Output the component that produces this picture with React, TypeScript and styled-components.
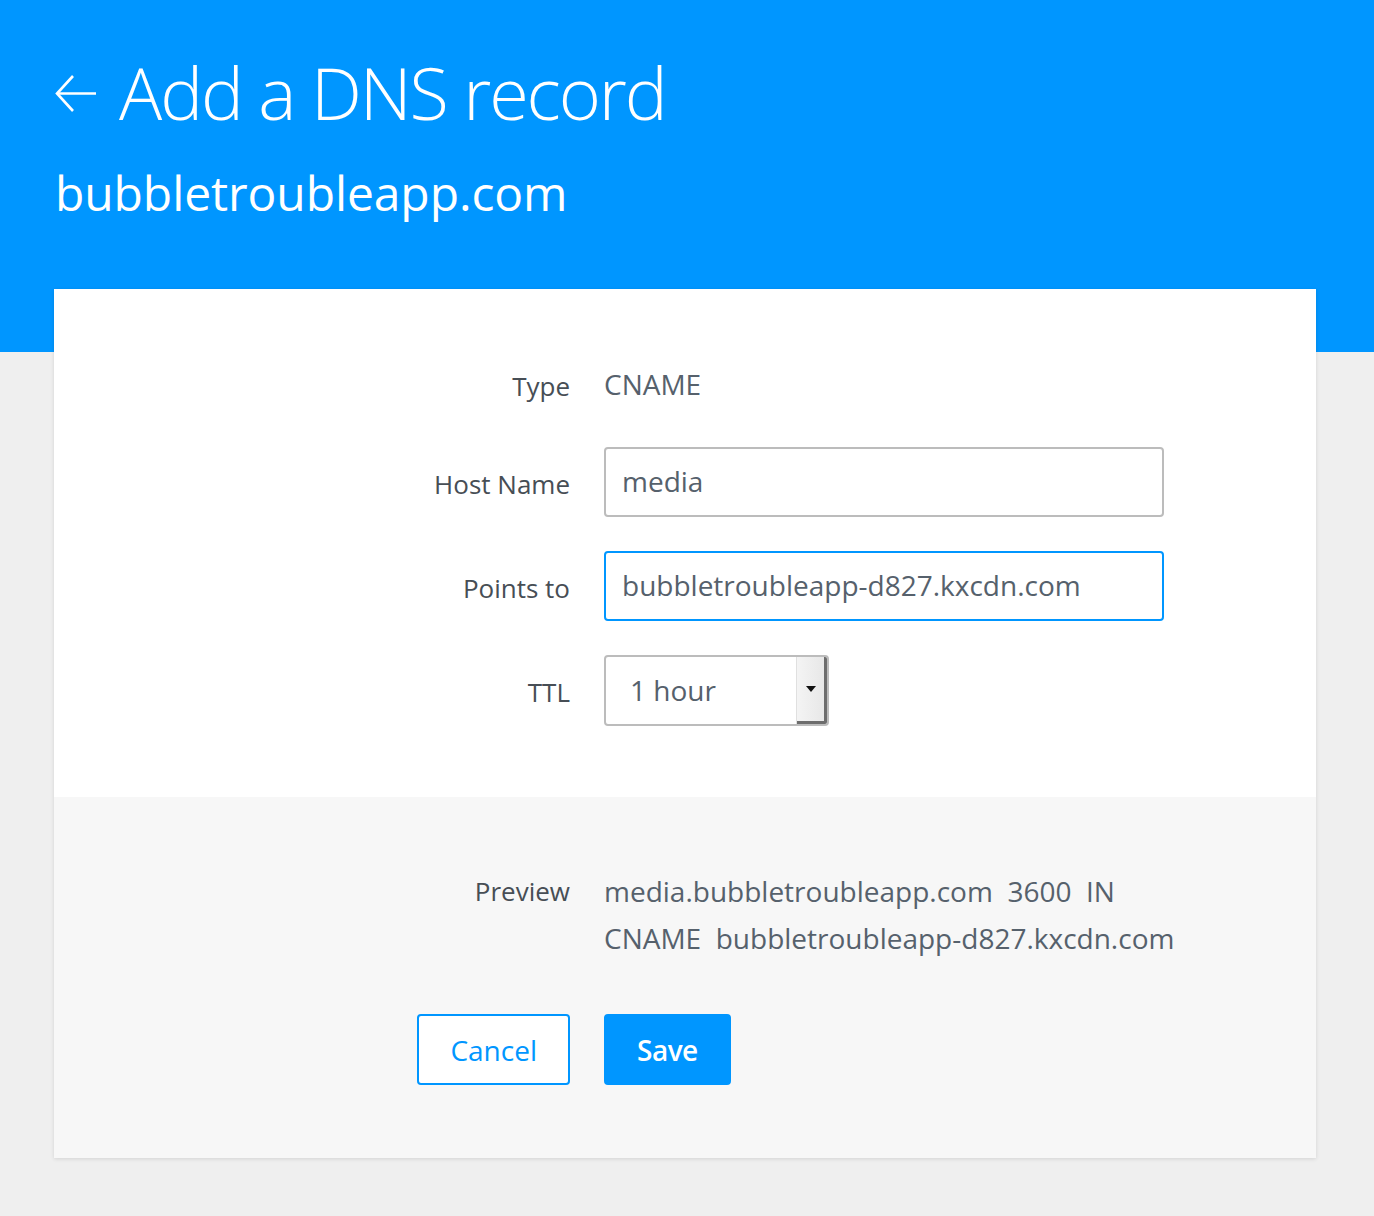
import * as React from 'react';
import styled, { createGlobalStyle } from 'styled-components';

const GlobalStyle = createGlobalStyle`
  html, body {
    margin: 0;
    padding: 0;
    background: #efefef;
    font-family: "Open Sans", "Liberation Sans", sans-serif;
  }
  * {
    box-sizing: border-box;
  }
`;

const Page = styled.div`
  min-height: 1216px;
  background: #efefef;
`;

const Header = styled.header`
  background: #0096ff;
  height: 352px;
  padding: 56px 55px 0;
  color: #fff;
`;

const TitleRow = styled.div`
  display: flex;
  align-items: center;
  gap: 22px;
`;

const BackArrow = styled.svg`
  width: 42px;
  height: 42px;
  margin-top: 4px;
  flex: none;
`;

const Title = styled.h1`
  margin: 0;
  font-size: 72px;
  font-weight: 300;
  line-height: 72px;
  letter-spacing: -2.1px;
`;

const Domain = styled.h2`
  margin: 41px 0 0;
  font-size: 48px;
  font-weight: 400;
  line-height: 48px;
  letter-spacing: -0.1px;
`;

const Card = styled.div`
  width: 1262px;
  margin: -63px 0 0 54px;
  background: #fff;
  box-shadow: 0 1px 4px rgba(0, 0, 0, 0.12);
`;

const Section = styled.section<{ $muted?: boolean }>`
  display: grid;
  grid-template-columns: 516px 1fr;
  column-gap: 34px;
  row-gap: ${(p) => (p.$muted ? '52px' : '34px')};
  padding: ${(p) => (p.$muted ? '71px 0 73px' : '66px 0 71px')};
  background: ${(p) => (p.$muted ? '#f7f7f7' : '#fff')};
`;

const Label = styled.div<{ $top?: boolean }>`
  display: flex;
  align-items: ${(p) => (p.$top ? 'flex-start' : 'center')};
  justify-content: flex-end;
  font-size: 26px;
  color: #474e55;
  line-height: 47px;
  padding-top: ${(p) => (p.$top ? '0' : '4px')};
`;

const Value = styled.div`
  display: flex;
  align-items: center;
  min-height: 58px;
  font-size: 28px;
  color: #56616c;
`;

const TextInput = styled.div<{ $focused?: boolean }>`
  width: 560px;
  height: 70px;
  display: flex;
  align-items: center;
  padding: 0 16px 2px;
  font-size: 28px;
  color: #56616c;
  background: #fff;
  border: 2px solid ${(p) => (p.$focused ? '#0096ff' : '#bcbcbc')};
  border-radius: 4px;
`;

const Select = styled.div`
  width: 225px;
  height: 71px;
  display: flex;
  background: #fff;
  border: 2px solid #bcbcbc;
  border-radius: 4px;
  overflow: hidden;
`;

const SelectText = styled.div`
  flex: 1;
  display: flex;
  align-items: center;
  padding: 0 0 2px 24px;
  font-size: 28px;
  color: #56616c;
`;

const SelectButton = styled.div`
  width: 31px;
  display: flex;
  align-items: center;
  justify-content: center;
  background: linear-gradient(to right, #f4f4f4, #e6e6e6);
  border-left: 1px solid #e0e0e0;
  box-shadow: inset -3px -3px 0 #6d6d6d;
`;

const Caret = styled.span`
  width: 0;
  height: 0;
  margin: 0 3px 3px 0;
  border-left: 5px solid transparent;
  border-right: 5px solid transparent;
  border-top: 6px solid #111;
`;

const PreviewText = styled.div`
  font-size: 28px;
  line-height: 47px;
  color: #56616c;
  white-space: pre;
`;

const Actions = styled.div<{ $end?: boolean }>`
  display: flex;
  justify-content: ${(p) => (p.$end ? 'flex-end' : 'flex-start')};
`;

const Button = styled.button<{ $primary?: boolean }>`
  height: 71px;
  padding: 0 31px;
  font-family: inherit;
  font-size: 28px;
  font-weight: ${(p) => (p.$primary ? 600 : 400)};
  letter-spacing: ${(p) => (p.$primary ? '-0.5px' : '0')};
  border-radius: 4px;
  border: 2px solid #0096ff;
  background: ${(p) => (p.$primary ? '#0096ff' : '#fff')};
  color: ${(p) => (p.$primary ? '#fff' : '#0096ff')};
  cursor: pointer;
`;

export default function App() {
  return (
    <Page>
      <GlobalStyle />
      <Header>
        <TitleRow>
          <BackArrow viewBox="0 0 42 42" fill="none" stroke="#fff" strokeWidth="2.6">
            <path d="M2 20.5 H41" />
            <path d="M18 3 L2 20.5 L18 38" strokeLinejoin="miter" />
          </BackArrow>
          <Title>Add a DNS record</Title>
        </TitleRow>
        <Domain>bubbletroubleapp.com</Domain>
      </Header>

      <Card>
        <Section>
          <Label>Type</Label>
          <Value>CNAME</Value>

          <Label>Host Name</Label>
          <div>
            <TextInput>media</TextInput>
          </div>

          <Label>Points to</Label>
          <div>
            <TextInput $focused>bubbletroubleapp-d827.kxcdn.com</TextInput>
          </div>

          <Label>TTL</Label>
          <div>
            <Select>
              <SelectText>1 hour</SelectText>
              <SelectButton>
                <Caret />
              </SelectButton>
            </Select>
          </div>
        </Section>

        <Section $muted>
          <Label $top>Preview</Label>
          <PreviewText>
            {'media.bubbletroubleapp.com  3600  IN\nCNAME  bubbletroubleapp-d827.kxcdn.com'}
          </PreviewText>

          <Actions $end>
            <Button>Cancel</Button>
          </Actions>
          <Actions>
            <Button $primary>Save</Button>
          </Actions>
        </Section>
      </Card>
    </Page>
  );
}
